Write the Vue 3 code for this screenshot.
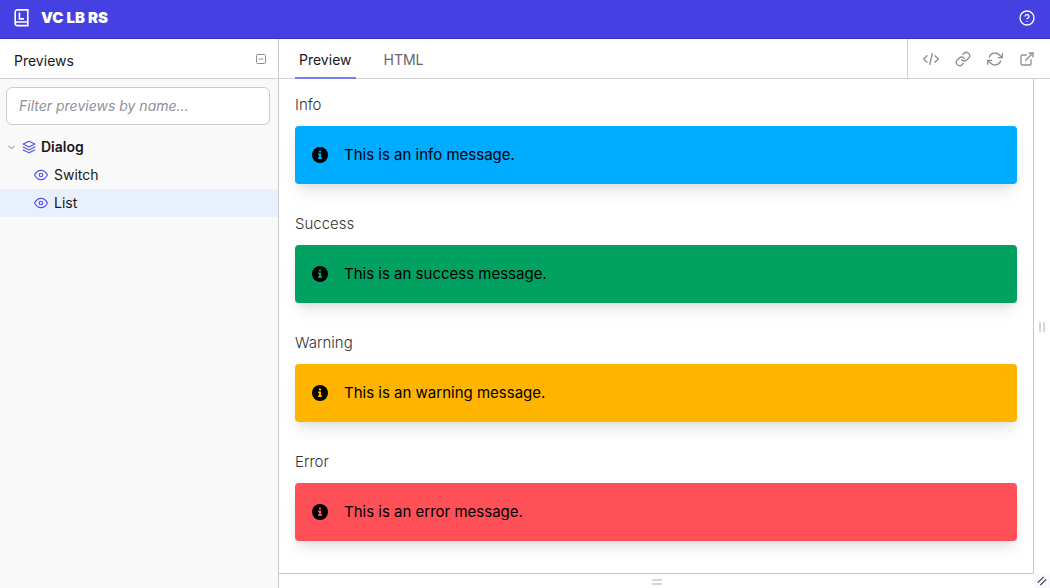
<template>
  <div class="app">
    <header class="topbar">
      <a href="#" class="brand">
        <svg class="brand-icon" viewBox="0 0 16 20" fill="none" stroke="currentColor" stroke-width="1.8">
          <path d="M1 16.5V3.2A2.2 2.2 0 0 1 3.2 1H15v17.5H3A2 2 0 0 1 3 14.5H15" />
          <path d="M5.700 4v7h5" />
        </svg>
        <span>VC LB RS</span>
      </a>
      <button type="button" class="icon-button help" aria-label="Help">
        <svg class="icon" viewBox="0 0 24 24">
          <circle cx="12" cy="12" r="10.5" />
          <path d="M9.090 9a3 3 0 0 1 5.830 1c0 2-3 3-3 3" />
          <path d="M12 17h.01" />
        </svg>
      </button>
    </header>

    <div class="body">
      <aside class="sidebar">
        <div class="sidebar-header">
          <h2>Previews</h2>
          <button type="button" class="icon-button collapse" aria-label="Collapse all">
            <svg class="icon" viewBox="0 0 24 24">
              <rect x="3" y="3" width="18" height="18" rx="2" />
              <path d="M8 12h8" />
            </svg>
          </button>
        </div>
        <div class="filter">
          <input v-model="filter" type="text" placeholder="Filter previews by name..." aria-label="Filter previews by name" />
        </div>
        <nav>
          <button type="button" class="group" :aria-expanded="open" @click="open = !open">
            <svg class="icon chevron" :class="{ closed: !open }" viewBox="0 0 24 24">
              <path d="M6 9l6 6 6-6" />
            </svg>
            <svg class="icon layers" viewBox="0 0 24 24">
              <path d="M12 2L2 7l10 5 10-5-10-5z" />
              <path d="M2 17l10 5 10-5" />
              <path d="M2 12l10 5 10-5" />
            </svg>
            <span>Dialog</span>
          </button>
          <template v-if="open">
            <a
              v-for="item in visibleItems"
              :key="item"
              href="#"
              class="item"
              :class="{ active: item === selected }"
              @click.prevent="selected = item"
            >
              <svg class="icon eye" viewBox="0 0 24 24">
                <path d="M1 12s4-8 11-8 11 8 11 8-4 8-11 8-11-8-11-8z" />
                <circle cx="12" cy="12" r="3" />
              </svg>
              <span>{{ item }}</span>
            </a>
          </template>
        </nav>
      </aside>

      <main class="main">
        <div class="toolbar">
          <div class="tabs" role="tablist">
            <button
              v-for="name in tabs"
              :key="name"
              type="button"
              role="tab"
              class="tab"
              :class="{ active: name === tab }"
              :aria-selected="name === tab"
              @click="tab = name"
            >
              {{ name }}
            </button>
          </div>
          <div class="actions">
            <button v-for="action in actions" :key="action.label" type="button" class="icon-button" :aria-label="action.label">
              <svg class="icon" viewBox="0 0 24 24">
                <path v-for="d in action.paths" :key="d" :d="d" />
              </svg>
            </button>
          </div>
        </div>

        <div class="viewport">
          <div class="canvas">
            <section v-for="alert in alerts" :key="alert.type" class="example">
              <p class="label">{{ alert.title }}</p>
              <div class="alert" :class="alert.type" role="alert">
                <svg class="alert-icon" viewBox="0 0 16 16">
                  <circle cx="8" cy="8" r="8" />
                  <path class="mark" d="M7 3.500h2v2H7zM6 6.500h3v4h1v1.500H6v-1.500h1V8H6z" />
                </svg>
                <span>{{ alert.message }}</span>
              </div>
            </section>
          </div>
          <div class="handle right"><span class="grip"></span></div>
          <div class="handle bottom"><span class="grip"></span></div>
          <div class="handle corner">
            <svg viewBox="0 0 12 12" fill="none" stroke="currentColor" stroke-width="1.5">
              <path d="M1 8L8 1M4 11l7-7" />
            </svg>
          </div>
        </div>
      </main>
    </div>
  </div>
</template>

<script setup>
import { ref, computed } from 'vue';

const filter = ref('');
const open = ref(true);
const selected = ref('List');
const tab = ref('Preview');

const items = ['Switch', 'List'];
const tabs = ['Preview', 'HTML'];

const visibleItems = computed(() => {
  return items.filter((item) => item.toLowerCase().includes(filter.value.toLowerCase()));
});

const alerts = [
  { type: 'info', title: 'Info', message: 'This is an info message.' },
  { type: 'success', title: 'Success', message: 'This is an success message.' },
  { type: 'warning', title: 'Warning', message: 'This is an warning message.' },
  { type: 'error', title: 'Error', message: 'This is an error message.' },
];

const actions = [
  { label: 'View source', paths: ['M18 17l5-5-5-5', 'M6 7l-5 5 5 5', 'M14 4l-4 16'] },
  {
    label: 'Copy link',
    paths: [
      'M10 13a5 5 0 0 0 7.54.54l3-3a5 5 0 0 0-7.07-7.07l-1.72 1.71',
      'M14 11a5 5 0 0 0-7.54-.54l-3 3a5 5 0 0 0 7.07 7.07l1.71-1.71',
    ],
  },
  {
    label: 'Refresh',
    paths: [
      'M23 4v6h-6',
      'M1 20v-6h6',
      'M3.51 9a9 9 0 0 1 14.85-3.36L23 10M1 14l4.64 4.36A9 9 0 0 0 20.49 15',
    ],
  },
  {
    label: 'Open in new window',
    paths: ['M18 13v6a2 2 0 0 1-2 2H5a2 2 0 0 1-2-2V8a2 2 0 0 1 2-2h6', 'M15 3h6v6', 'M10 14L21 3'],
  },
];
</script>

<style>
body {
  margin: 0;
}
</style>

<style scoped>
.app {
  display: flex;
  flex-direction: column;
  min-height: 100vh;
  font-family: Inter, "Liberation Sans", sans-serif;
  font-size: 14px;
  line-height: 20px;
  color: #18181b;
  background: #fff;
}

.app * {
  box-sizing: border-box;
}

button,
input {
  font: inherit;
  color: inherit;
}

button {
  padding: 0;
  border: 0;
  background: none;
  cursor: pointer;
}

a {
  color: inherit;
  text-decoration: none;
}

.icon {
  display: block;
  flex: none;
  width: 16px;
  height: 16px;
  fill: none;
  stroke: currentColor;
  stroke-width: 2;
  stroke-linecap: round;
  stroke-linejoin: round;
}

.topbar {
  display: flex;
  align-items: center;
  justify-content: space-between;
  height: 39px;
  padding: 0 15px 2px 14px;
  border-bottom: 1px solid #3730bd;
  background: #4540e1;
  color: #fff;
}

.brand {
  display: flex;
  align-items: center;
  gap: 12px;
  font-size: 15px;
  font-weight: 900;
}

.brand-icon {
  width: 15px;
  height: 18px;
}

.body {
  display: grid;
  grid-template-columns: 279px 1fr;
  flex: 1;
}

.sidebar {
  border-right: 1px solid #c9c9cd;
  background: #f9f9f9;
}

.sidebar-header {
  display: flex;
  align-items: center;
  justify-content: space-between;
  height: 40px;
  padding: 4px 11px 0 14px;
  border-bottom: 1px solid #d0d0d4;
  background: #fff;
}

.sidebar-header h2 {
  margin: 0;
  font-size: 14px;
  font-weight: 400;
}

.collapse {
  padding-bottom: 4px;
  color: #8e8e99;
}

.collapse .icon {
  width: 12px;
  height: 12px;
}

.filter {
  padding: 8px 8px 8px 6px;
}

.filter input {
  display: block;
  width: 100%;
  height: 38px;
  padding: 0 12px 2px;
  border: 1px solid #ccccd0;
  border-radius: 6px;
  background: #fff;
}

.filter input::placeholder {
  color: #90909a;
  font-style: italic;
  opacity: 1;
}

.group,
.item {
  display: flex;
  align-items: center;
  gap: 6px;
  width: 100%;
  height: 28px;
}

.group {
  padding-left: 6px;
  gap: 5px;
  font-weight: 600;
}

.chevron {
  width: 11px;
  height: 11px;
  color: #71717a;
}

.chevron.closed {
  transform: rotate(-90deg);
}

.layers,
.eye {
  width: 14px;
  height: 14px;
  color: #5650ee;
}

.item {
  padding-left: 34px;
}

.item.active {
  background: #e8effd;
}

.main {
  display: flex;
  flex-direction: column;
  min-width: 0;
}

.toolbar {
  display: flex;
  justify-content: space-between;
  height: 40px;
  border-bottom: 1px solid #d0d0d4;
}

.tabs {
  display: flex;
  gap: 24px;
  padding-left: 16px;
}

.tab {
  margin-bottom: -1px;
  padding: 4px 4px 0;
  border-bottom: 2px solid transparent;
  color: #66666f;
}

.tab.active {
  border-color: #747df2;
  color: #18181b;
}

.actions {
  display: flex;
  align-items: center;
  gap: 16px;
  padding: 0 15px;
  border-left: 1px solid #d0d0d4;
  color: #8e8e96;
}

.viewport {
  display: grid;
  grid-template-columns: 1fr 16px;
  grid-template-rows: 1fr 14px;
  flex: 1;
}

.canvas {
  display: flex;
  flex-direction: column;
  gap: 30px;
  padding: 16px;
  border-right: 1px solid #c9c9cd;
  border-bottom: 1px solid #c9c9cd;
}

.label {
  margin: 0 0 11px;
  font-size: 15px;
  font-weight: 300;
  color: #333;
}

.alert {
  display: flex;
  align-items: center;
  gap: 16px;
  height: 58px;
  padding: 0 17px;
  border-radius: 4px;
  background: var(--tone);
  box-shadow: 0 10px 15px -3px rgba(0, 0, 0, 0.1), 0 4px 6px -2px rgba(0, 0, 0, 0.05);
  font-size: 15px;
  color: #000;
}

.alert-icon {
  flex: none;
  width: 16px;
  height: 16px;
}

.mark {
  fill: var(--tone);
}

.info {
  --tone: #00acff;
}

.success {
  --tone: #00a161;
}

.warning {
  --tone: #ffb500;
}

.error {
  --tone: #ff4f57;
}

.handle {
  display: flex;
  align-items: center;
  justify-content: center;
}

.bottom {
  padding-top: 2px;
}

.grip {
  border: solid #d6d6dc;
}

.right .grip {
  width: 6px;
  height: 10px;
  border-width: 0 2px;
}

.bottom .grip {
  width: 10px;
  height: 6px;
  border-width: 2px 0;
}

.corner {
  background: #f8f8fe;
  color: #3f3f46;
}

.corner svg {
  width: 10px;
  height: 10px;
}
</style>
